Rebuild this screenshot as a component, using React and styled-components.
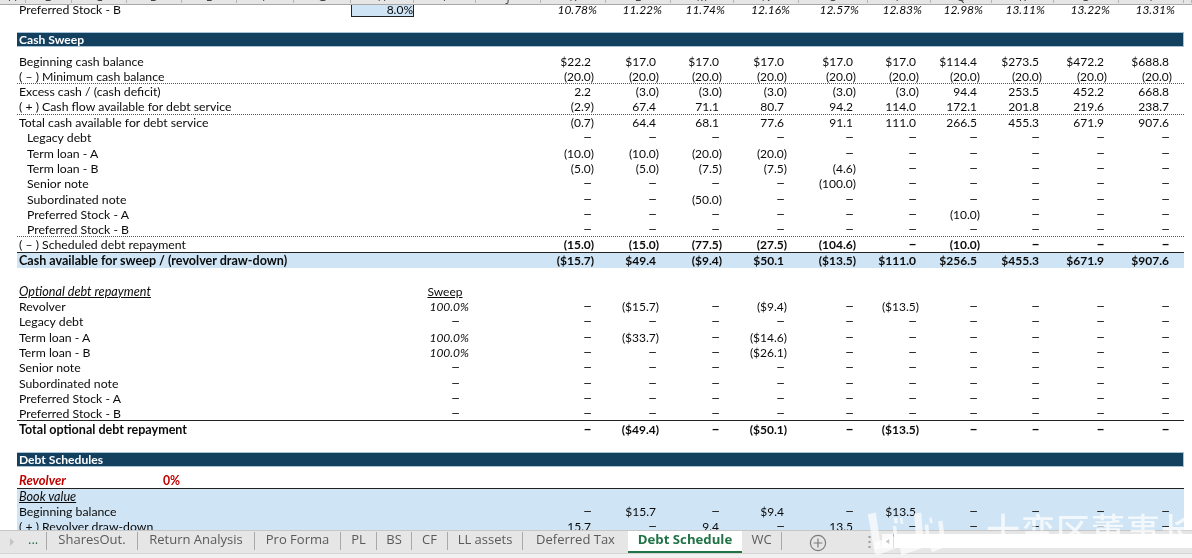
import React from "react";
import styled, { createGlobalStyle } from "styled-components";

const Global = createGlobalStyle`
  html, body { margin: 0; padding: 0; background: #fff; }
  #root { width: 1192px; height: 558px; overflow: hidden; }
`;

const Page = styled.div`
  position: relative;
  width: 1192px;
  height: 558px;
  overflow: hidden;
  display: flex;
  flex-direction: column;
  font-family: Lato, "Liberation Sans", sans-serif;
  font-size: 12px;
  color: #0a0a0a;
  filter: blur(0.25px);
`;

const ColumnStrip = styled.div`
  flex: none;
  height: 5px;
  box-sizing: border-box;
  display: grid;
  grid-template-columns: 26px 46px 55px 55px 55px 57px 57px 63px 62px 65px 65px 65px 63px 65px 69px 63px 61px 62px 65px 65px 8px;
  background: #e6e6e6;
  border-bottom: 1px solid #a8a8a8;
  position: relative;
  z-index: 2;
  overflow: hidden;
`;

const ColumnHead = styled.div`
  border-right: 1px solid #b4b4b4;
  text-align: center;
  font-family: "Open Sans", sans-serif;
  font-size: 12px;
  line-height: 12px;
  height: 12px;
  color: #444;
  margin-top: -9px;
`;

const Sheet = styled.div`
  flex: 1;
  min-height: 0;
  overflow: hidden;
  padding-left: 17px;
  margin-top: -3.5px;
`;

const Row = styled.div`
  width: 1167px;
  height: 15.33px;
  box-sizing: border-box;
  display: grid;
  grid-template-columns: 334px 63px 62px 65px 65px 65px 63px 65px 69px 63px 61px 62px 65px 65px;
  align-items: center;
  line-height: 15px;
  white-space: nowrap;
  background: ${(p) => (p.$tint ? "#cfe4f4" : "transparent")};
  border-bottom: ${(p) =>
    p.$rule === "dotted"
      ? "1px dotted #555"
      : p.$rule === "solid"
      ? "1px solid #222"
      : "none"};
`;

const Spacer = styled.div`
  height: ${(p) => p.$h}px;
`;

const Band = styled.div`
  width: 1167px;
  height: 15.33px;
  box-sizing: border-box;
  background: #14405f;
  border: 1px solid #a9c3d6;
  border-width: 1px 1px 1px 0;
  color: #fff;
  font-weight: 700;
  font-size: 12.1px;
  line-height: 13px;
  padding-left: 2px;
`;

const Label = styled.div`
  padding-left: ${(p) => (p.$indent ? 10 : 2)}px;
  display: flex;
  font-size: ${(p) => (p.$bold ? 12.55 : p.$italic ? 12.65 : 12.25)}px;
  font-weight: ${(p) => (p.$bold ? 700 : 400)};
  font-style: ${(p) => (p.$italic ? "italic" : "normal")};
  text-decoration: ${(p) => (p.$under ? "underline" : "none")};
`;

const RedName = styled.span`
  width: 144px;
  color: #c00000;
  font-weight: 700;
  font-size: 13px;
  font-style: italic;
`;

const RedPct = styled.span`
  color: #c00000;
  font-weight: 700;
`;

const Cell = styled.div`
  text-align: right;
  padding-right: ${(p) => p.$pad}px;
  font-style: ${(p) => (p.$italic ? "italic" : "normal")};
  font-weight: ${(p) => (p.$bold ? 700 : 400)};
`;

const DashCell = styled.div`
  text-align: right;
  padding-right: ${(p) => p.$pad}px;
  font-family: "Liberation Sans", sans-serif;
  font-size: 12px;
  font-weight: ${(p) => (p.$bold ? 700 : 400)};
`;

const InputCell = styled.div`
  height: 15.33px;
  box-sizing: border-box;
  background: #cfe4f4;
  border: 1px solid #222;
  text-align: right;
  line-height: 14px;
`;

const SweepHead = styled.div`
  text-align: center;
  text-decoration: underline;
`;

const TabBar = styled.div`
  position: absolute;
  left: 0;
  right: 0;
  bottom: 0;
  height: 28px;
  box-sizing: border-box;
  background: #e6e6e6;
  border-top: 1px solid #c6c6c6;
  z-index: 3;
  display: flex;
  flex-direction: column;
`;

const TabRow = styled.div`
  height: 22px;
  flex: none;
  display: flex;
  align-items: stretch;
  font-family: "Open Sans", sans-serif;
  font-size: 13px;
  color: #5a5a5a;
`;

const FootStrip = styled.div`
  flex: 1;
  background: #f1f1f1;
  border-top: 1px solid #d4d4d4;
`;

const NavArrow = styled.div`
  width: 28px;
  display: flex;
  align-items: center;
  padding-left: 8px;
  box-sizing: border-box;
`;

const Ellipsis = styled.div`
  width: 18px;
  color: #217346;
  line-height: 14px;
  border-right: 1px solid #a9a9a9;
  margin: 1px 0 3px;
  text-align: left;
`;

const Tab = styled.div`
  box-sizing: border-box;
  width: ${(p) => p.$w}px;
  line-height: 15px;
  text-align: center;
  margin: 1px 0 3px;
  border-right: ${(p) => (p.$noSep ? "none" : "1px solid #a9a9a9")};
`;

const ActiveTab = styled.div`
  box-sizing: border-box;
  width: ${(p) => p.$w}px;
  background: #fff;
  color: #217346;
  font-weight: 700;
  font-size: 13.2px;
  text-align: center;
  line-height: 17px;
  border-bottom: 2px solid #217346;
`;

const AddTab = styled.div`
  width: 72px;
  display: flex;
  align-items: center;
  justify-content: center;
  padding-top: 2px;
`;

const Grip = styled.div`
  width: 26px;
  margin-left: 2px;
  display: flex;
  align-items: center;
  justify-content: center;
`;

const ScrollStart = styled.div`
  width: 11px;
  height: 14px;
  margin-top: 3px;
  display: flex;
  align-items: center;
  justify-content: center;
  background: #fbfbfb;
`;

const ScrollTrack = styled.div`
  flex: 1;
  height: 14px;
  margin-top: 3px;
  background: #fff;
  border-left: 1px solid #9a9a9a;
`;

const Watermark = styled.div`
  position: absolute;
  left: 866px;
  top: 508px;
  width: 330px;
  height: 50px;
  z-index: 4;
  overflow: hidden;
  display: flex;
  pointer-events: none;
`;

const WatermarkText = styled.div`
  margin-left: 31px;
  font-family: "Noto Sans CJK SC", sans-serif;
  font-size: 34px;
  font-weight: 500;
  letter-spacing: 1px;
  line-height: 42px;
  color: rgba(255, 255, 255, 0.72);
  white-space: nowrap;
`;

const D = "–";
const dashes = (n) => Array(n).fill(D);

const pct = ["10.78%", "11.22%", "11.74%", "12.16%", "12.57%", "12.83%", "12.98%", "13.11%", "13.22%", "13.31%"];

const sweepRows = [
  { label: "Beginning cash balance", v: ["$22.2", "$17.0", "$17.0", "$17.0", "$17.0", "$17.0", "$114.4", "$273.5", "$472.2", "$688.8"] },
  { label: "( – ) Minimum cash balance", v: Array(10).fill("(20.0)"), rule: "dotted" },
  { label: "Excess cash / (cash deficit)", v: ["2.2", "(3.0)", "(3.0)", "(3.0)", "(3.0)", "(3.0)", "94.4", "253.5", "452.2", "668.8"] },
  { label: "( + ) Cash flow available for debt service", v: ["(2.9)", "67.4", "71.1", "80.7", "94.2", "114.0", "172.1", "201.8", "219.6", "238.7"], rule: "dotted" },
  { label: "Total cash available for debt service", v: ["(0.7)", "64.4", "68.1", "77.6", "91.1", "111.0", "266.5", "455.3", "671.9", "907.6"] },
  { label: "Legacy debt", indent: true, v: dashes(10) },
  { label: "Term loan - A", indent: true, v: ["(10.0)", "(10.0)", "(20.0)", "(20.0)", ...dashes(6)] },
  { label: "Term loan - B", indent: true, v: ["(5.0)", "(5.0)", "(7.5)", "(7.5)", "(4.6)", ...dashes(5)] },
  { label: "Senior note", indent: true, v: [...dashes(4), "(100.0)", ...dashes(5)] },
  { label: "Subordinated note", indent: true, v: [D, D, "(50.0)", ...dashes(7)] },
  { label: "Preferred Stock - A", indent: true, v: [...dashes(6), "(10.0)", D, D, D] },
  { label: "Preferred Stock - B", indent: true, v: dashes(10), rule: "dotted" },
  { label: "( – ) Scheduled debt repayment", boldValues: true, v: ["(15.0)", "(15.0)", "(77.5)", "(27.5)", "(104.6)", D, "(10.0)", D, D, D], rule: "solid" },
  { label: "Cash available for sweep / (revolver draw-down)", boldLabel: true, boldValues: true, tint: true, v: ["($15.7)", "$49.4", "($9.4)", "$50.1", "($13.5)", "$111.0", "$256.5", "$455.3", "$671.9", "$907.6"] },
];

const optionalRows = [
  { label: "Revolver", sweep: "100.0%", v: [D, "($15.7)", D, "($9.4)", D, "($13.5)", D, D, D, D] },
  { label: "Legacy debt", sweep: D, v: dashes(10) },
  { label: "Term loan - A", sweep: "100.0%", v: [D, "($33.7)", D, "($14.6)", ...dashes(6)] },
  { label: "Term loan - B", sweep: "100.0%", v: [D, D, D, "($26.1)", ...dashes(6)] },
  { label: "Senior note", sweep: D, v: dashes(10) },
  { label: "Subordinated note", sweep: D, v: dashes(10) },
  { label: "Preferred Stock - A", sweep: D, v: dashes(10) },
  { label: "Preferred Stock - B", sweep: D, v: dashes(10), rule: "solid" },
  { label: "Total optional debt repayment", boldLabel: true, boldValues: true, v: [D, "($49.4)", D, "($50.1)", D, "($13.5)", D, D, D, D] },
];

const padFor = (t) => (t.endsWith(")") ? 12 : 15);

const Values = ({ v, bold }) =>
  v.map((t, i) =>
    t === D ? (
      <DashCell key={i} $pad={15} $bold={bold}>{t}</DashCell>
    ) : (
      <Cell key={i} $pad={padFor(t)} $bold={bold}>{t}</Cell>
    )
  );

const DataRow = ({ r }) => (
  <Row $tint={r.tint} $rule={r.rule}>
    <Label $indent={r.indent} $bold={r.boldLabel}>{r.label}</Label>
    <div />
    {r.sweep === D ? (
      <DashCell $pad={17}>{D}</DashCell>
    ) : r.sweep ? (
      <Cell $pad={7} $italic>{r.sweep}</Cell>
    ) : (
      <div />
    )}
    <div />
    <Values v={r.v} bold={r.boldValues} />
  </Row>
);

const Blank = () => <Row />;

const letters = "ABCDEFGHIJKLMNOPQRSTU".split("");

const BiliLogo = () => (
  <svg width="100" height="50" viewBox="0 0 100 50" fill="rgba(255,255,255,0.68)">
    <polygon points="2,4 11,2 17,42 9,44" />
    <polygon points="10,35 34,28 36,41 13,50 9,47" />
    <polygon points="17,38 28,34 28,40 18,44" fill="rgba(255,255,255,0.2)" />
    <polygon points="30,17 34,17 36,36 32,36" />
    <polygon points="31,8 35,8 36,14 32,14" />
    <polygon points="38,8 41,8 42,15 39,15" />
    <polygon points="54,3 62,2 65,38 57,40" />
    <polygon points="38,42 62,37 63,42 40,50" />
    <polygon points="66,16 70,15 72,36 68,37" />
    <polygon points="71,8 74,8 75,14 72,14" />
    <polygon points="81,12 86,11 89,36 84,37" />
    <polygon points="72,41 90,35 91,40 74,47" />
  </svg>
);

const PlusCircle = () => (
  <svg width="18" height="18" viewBox="0 0 18 18" fill="none" stroke="#7c7c7c" strokeWidth="1.2">
    <circle cx="9" cy="9" r="7.6" />
    <path d="M9 4.6v8.8M4.6 9h8.8" />
  </svg>
);

const GripDots = () => (
  <svg width="3" height="13" viewBox="0 0 3 13" fill="#9a9a9a">
    <rect x="0.5" y="0" width="2" height="2" />
    <rect x="0.5" y="5" width="2" height="2" />
    <rect x="0.5" y="10" width="2" height="2" />
  </svg>
);

const Caret = ({ color, dir = "left", size = 8 }) => (
  <svg width={size} height={size} viewBox="0 0 8 8" fill={color}>
    <path d={dir === "left" ? "M6 1v6L2 4z" : "M2 0v8l4-4z"} />
  </svg>
);

export default function App() {
  return (
    <Page>
      <Global />
      <ColumnStrip>
        {letters.map((l, i) => (
          <ColumnHead key={l}>{i === 20 ? "" : l}</ColumnHead>
        ))}
      </ColumnStrip>
      <Sheet>
        <Row>
          <Label>Preferred Stock - B</Label>
          <InputCell>8.0%</InputCell>
          <div />
          <div />
          {pct.map((t) => (
            <Cell key={t} $pad={9} $italic>{t}</Cell>
          ))}
        </Row>
        <Blank />
        <Band>Cash Sweep</Band>
        <Spacer $h={6} />
        {sweepRows.map((r) => (
          <DataRow key={r.label} r={r} />
        ))}
        <Blank />
        <Row>
          <Label $italic $under>Optional debt repayment</Label>
          <div />
          <SweepHead>Sweep</SweepHead>
        </Row>
        {optionalRows.map((r) => (
          <DataRow key={r.label} r={r} />
        ))}
        <Blank />
        <Band>Debt Schedules</Band>
        <Spacer $h={6} />
        <Row $rule="solid">
          <Label>
            <RedName>Revolver</RedName>
            <RedPct>0%</RedPct>
          </Label>
        </Row>
        <Row $tint>
          <Label $italic $under>Book value</Label>
        </Row>
        <DataRow r={{ label: "Beginning balance", tint: true, v: [D, "$15.7", D, "$9.4", D, "$13.5", D, D, D, D] }} />
        <DataRow r={{ label: "( + ) Revolver draw-down", tint: true, v: ["15.7", D, "9.4", D, "13.5", D, D, D, D, D] }} />
      </Sheet>
      <TabBar>
        <TabRow>
          <NavArrow><Caret color="#c4c4c4" dir="right" /></NavArrow>
          <Ellipsis>...</Ellipsis>
          <Tab $w={91}>SharesOut.</Tab>
          <Tab $w={117}>Return Analysis</Tab>
          <Tab $w={86}>Pro Forma</Tab>
          <Tab $w={36}>PL</Tab>
          <Tab $w={35}>BS</Tab>
          <Tab $w={36}>CF</Tab>
          <Tab $w={75}>LL assets</Tab>
          <Tab $w={105} $noSep>Deferred Tax</Tab>
          <ActiveTab $w={114}>Debt Schedule</ActiveTab>
          <Tab $w={40}>WC</Tab>
          <AddTab><PlusCircle /></AddTab>
          <Grip><GripDots /></Grip>
          <ScrollStart><Caret color="#444" size={7} /></ScrollStart>
          <ScrollTrack />
        </TabRow>
        <FootStrip />
      </TabBar>
      <Watermark>
        <BiliLogo />
        <WatermarkText>十变区董事长</WatermarkText>
      </Watermark>
    </Page>
  );
}
